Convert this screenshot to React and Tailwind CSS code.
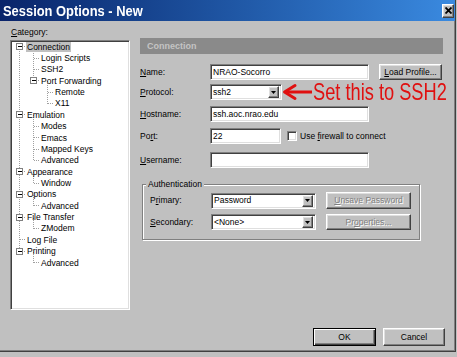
import React from "react";

const TREE = [
  ["Connection", 0, true],
  ["Login Scripts", 1, false],
  ["SSH2", 1, false],
  ["Port Forwarding", 1, true],
  ["Remote", 2, false],
  ["X11", 2, false],
  ["Emulation", 0, true],
  ["Modes", 1, false],
  ["Emacs", 1, false],
  ["Mapped Keys", 1, false],
  ["Advanced", 1, false],
  ["Appearance", 0, true],
  ["Window", 1, false],
  ["Options", 0, true],
  ["Advanced", 1, false],
  ["File Transfer", 0, true],
  ["ZModem", 1, false],
  ["Log File", 0, false],
  ["Printing", 0, true],
  ["Advanced", 1, false],
];

const ROW_H = 11.37;

function TreeLines() {
  const cy = (i) => Math.floor(5.7 + i * ROW_H) + 0.5;
  const xL = (l) => 8.5 + 14 * l;
  const segs = [];
  const boxes = [];
  const rootIdx = TREE.map((t, i) => (t[1] === 0 ? i : -1)).filter((i) => i >= 0);
  segs.push(["v", xL(0), cy(rootIdx[0]), cy(rootIdx[rootIdx.length - 1])]);
  TREE.forEach((t, i) => {
    const [, lvl, box] = t;
    segs.push(["h", xL(lvl), xL(lvl) + 6, cy(i)]);
    if (box) {
      let last = -1;
      for (let j = i + 1; j < TREE.length; j++) {
        if (TREE[j][1] <= lvl) break;
        if (TREE[j][1] === lvl + 1) last = j;
      }
      if (last > 0) segs.push(["v", xL(lvl + 1), cy(i), cy(last)]);
      boxes.push([xL(lvl), cy(i)]);
    }
  });
  return (
    <svg className="absolute left-0 top-0" width="116" height="266" shapeRendering="crispEdges">
      {segs.map((s, k) =>
        s[0] === "v" ? (
          <line key={k} x1={s[1]} x2={s[1]} y1={s[2]} y2={s[3]} stroke="#a0a0a0" strokeDasharray="1 1" />
        ) : (
          <line key={k} x1={s[1]} x2={s[2]} y1={s[3]} y2={s[3]} stroke="#a0a0a0" strokeDasharray="1 1" />
        )
      )}
      {boxes.map(([x, y], k) => (
        <g key={"b" + k}>
          <rect x={x - 3} y={y - 3} width="6" height="6" fill="#fff" stroke="#808080" />
          <line x1={x - 1.5} x2={x + 2} y1={y} y2={y} stroke="#000" />
        </g>
      ))}
    </svg>
  );
}

const sunken =
  "bg-white border border-t-[#808080] border-l-[#808080] border-r-white border-b-white shadow-[inset_1px_1px_0_#404040,inset_-1px_-1px_0_#dfdfdf]";
const raised =
  "bg-[#c0c0c0] border border-t-white border-l-white border-r-[#404040] border-b-[#404040] shadow-[inset_-1px_-1px_0_#808080,inset_1px_1px_0_#dfdfdf]";

function DropArrow() {
  return (
    <div className={"w-[11px] h-[12px] mr-[2px] shrink-0 flex items-center justify-center " + raised}>
      <svg width="5" height="3" viewBox="0 0 5 3">
        <path d="M0 0 H5 L2.5 3 Z" fill="#000" />
      </svg>
    </div>
  );
}

function Select({ w, value }) {
  return (
    <div className={"h-[16px] shrink-0 flex items-center justify-between pl-[2px] " + sunken + " " + w}>
      <span className="leading-none">{value}</span>
      <DropArrow />
    </div>
  );
}

function Label({ children, w = "w-[70px]" }) {
  return <div className={"shrink-0 leading-none whitespace-nowrap " + w}>{children}</div>;
}

export default function App() {
  return (
    <div className="w-[457px] h-[357px] bg-[#c0c0c0] overflow-hidden text-[8.5px] text-black font-['Liberation_Sans',Arial,sans-serif]">
      <div className="w-[456px] h-[352px] flex flex-col border-r border-b border-r-[#404040] border-b-[#404040] shadow-[inset_-1px_-1px_0_#808080]">
        {/* title bar */}
        <div className="h-[21px] shrink-0 flex items-center justify-between pl-[3px] pr-[1px] bg-linear-to-r from-[#0a246a] to-[#3a8ae0]">
          <span className="inline-block text-white font-bold text-[15px] leading-none whitespace-nowrap origin-left scale-x-[0.86]">
            Session Options - New
          </span>
          <div className={"w-[12px] h-[14px] flex items-center justify-center " + raised}>
            <svg width="7" height="7" viewBox="0 0 7 7">
              <path d="M0.5 0.5 L6.5 6.5 M6.5 0.5 L0.5 6.5" stroke="#000" strokeWidth="1.8" />
            </svg>
          </div>
        </div>

        {/* body */}
        <div className="h-[289px] shrink-0 flex pl-[10px]">
          {/* category tree */}
          <div className="w-[120px] flex flex-col pt-[5px]">
            <div className="h-[12px] leading-[12px] pl-[1px]">
              <u>C</u>ategory:
            </div>
            <div className={"mt-[2px] h-[270px] relative " + sunken}>
              <TreeLines />
              <div className="relative">
                {TREE.map(([name, lvl], i) => (
                  <div key={i} className="h-[11.37px] flex items-center whitespace-nowrap">
                    <span
                      className={
                        "px-[1px] h-[10px] leading-[10px] " +
                        (lvl === 0 ? "ml-[15px] " : lvl === 1 ? "ml-[29px] " : "ml-[43px] ") +
                        (i === 0 ? "bg-[#c0c0c0]" : "")
                      }
                    >
                      {name}
                    </span>
                  </div>
                ))}
              </div>
            </div>
          </div>

          {/* right panel */}
          <div className="ml-[10px] w-[303px] pt-[17px] flex flex-col">
            <div className="h-[16px] bg-[#8a8a8a] flex items-center pl-[7px] text-[#c4c4c4] font-bold text-[9px] leading-none">
              Connection
            </div>

            <div className="mt-[10px] h-[16px] flex items-center">
              <Label>
                <u>N</u>ame:
              </Label>
              <div className={"w-[159px] h-[16px] flex items-center pl-[2px] " + sunken}>NRAO-Socorro</div>
              <div className={"ml-[10px] w-[63px] h-[16px] flex items-center justify-center leading-none whitespace-nowrap " + raised}>
                <span>
                  <u>L</u>oad Profile...
                </span>
              </div>
            </div>

            <div className="mt-[4px] h-[16px] flex items-center">
              <Label>
                <u>P</u>rotocol:
              </Label>
              <Select w="w-[72px]" value="ssh2" />
              <svg width="31" height="18" viewBox="0 0 31 18" className="shrink-0">
                <path d="M13 2.5 L2.5 9 L13 15.5" fill="none" stroke="#e01010" strokeWidth="3" strokeLinecap="round" strokeLinejoin="round" />
                <path d="M3 9 H30" stroke="#e01010" strokeWidth="3" />
              </svg>
              <span className="inline-block text-[24px] text-[#e01010] leading-none whitespace-nowrap origin-left scale-x-[0.76]">
                Set this to SSH2
              </span>
            </div>

            <div className="mt-[6px] h-[16px] flex items-center">
              <Label>
                <u>H</u>ostname:
              </Label>
              <div className={"w-[159px] h-[16px] flex items-center pl-[2px] " + sunken}>ssh.aoc.nrao.edu</div>
            </div>

            <div className="mt-[6px] h-[16px] flex items-center">
              <Label>
                Po<u>r</u>t:
              </Label>
              <div className={"w-[71px] h-[16px] flex items-center pl-[2px] " + sunken}>22</div>
              <div className={"ml-[6px] w-[10px] h-[10px] " + sunken}></div>
              <span className="ml-[3px] leading-none whitespace-nowrap">
                Use <u>f</u>irewall to connect
              </span>
            </div>

            <div className="mt-[8px] h-[16px] flex items-center">
              <Label>
                <u>U</u>sername:
              </Label>
              <div className={"w-[159px] h-[16px] " + sunken}></div>
            </div>

            <div className="mt-[16px] ml-[2px] w-[278px] relative border border-[#808080] shadow-[inset_1px_1px_0_#fff,1px_1px_0_#fff] pt-[7px] pl-[7px] pb-[9px]">
              <span className="absolute left-[3px] -top-[7px] px-[2px] h-[12px] leading-[12px] bg-[#c0c0c0]">
                Authentication
              </span>
              <div className="h-[17px] flex items-center">
                <Label w="w-[61px]">
                  P<u>r</u>imary:
                </Label>
                <Select w="w-[105px]" value="Password" />
                <div className={"ml-[10px] w-[85px] h-[17px] flex items-center justify-center leading-none whitespace-nowrap text-[#808080] [text-shadow:1px_1px_0_#fff] " + raised}>
                  <span>
                    <u>U</u>nsave Password
                  </span>
                </div>
              </div>
              <div className="mt-[5px] h-[16px] flex items-center">
                <Label w="w-[61px]">
                  <u>S</u>econdary:
                </Label>
                <Select w="w-[105px]" value="<None>" />
                <div className={"ml-[10px] w-[85px] h-[16px] flex items-center justify-center leading-none whitespace-nowrap text-[#808080] [text-shadow:1px_1px_0_#fff] " + raised}>
                  <span>
                    Pr<u>o</u>perties...
                  </span>
                </div>
              </div>
            </div>
          </div>
        </div>

        {/* bottom buttons */}
        <div className="mt-[18px] flex justify-end gap-[7px] pr-[10px]">
          <div className="w-[63px] h-[18px] flex items-center justify-center leading-none bg-[#c0c0c0] border border-black shadow-[inset_1px_1px_0_#fff,inset_-1px_-1px_0_#404040,inset_-2px_-2px_0_#808080]">
            OK
          </div>
          <div className={"w-[62px] h-[18px] flex items-center justify-center leading-none " + raised}>Cancel</div>
        </div>
      </div>
    </div>
  );
}
